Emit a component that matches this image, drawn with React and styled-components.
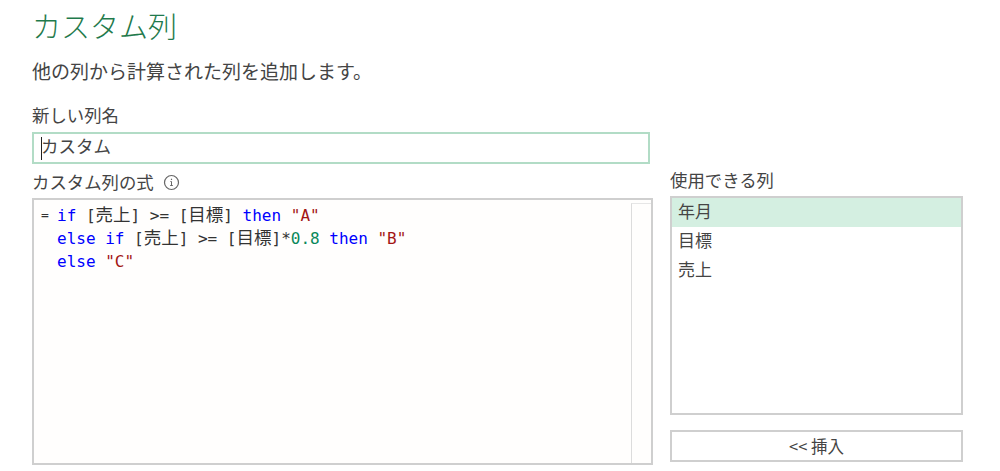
import React from "react";
import styled, { createGlobalStyle } from "styled-components";

const GlobalStyle = createGlobalStyle`
  html, body {
    margin: 0;
    background: #fff;
  }
  body {
    width: 1000px;
    height: 471px;
    overflow: hidden;
    font-family: "Noto Sans CJK JP", "Liberation Sans", sans-serif;
    color: #444;
  }
`;

const Page = styled.div`
  width: 1000px;
  height: 471px;
  overflow: hidden;
  box-sizing: border-box;
  padding: 6px 37px 0 32px;
`;

const Title = styled.h1`
  margin: 0;
  height: 38px;
  font-size: 29px;
  line-height: 38px;
  font-weight: 300;
  color: #1f7a4c;
`;

const Subtitle = styled.p`
  margin: 15px 0 0;
  font-size: 19px;
  line-height: 24px;
  font-weight: 400;
`;

const Label = styled.div`
  display: flex;
  align-items: center;
  gap: 9px;
  margin-top: ${(p) => p.$top || 0}px;
  font-size: 17.4px;
  line-height: 24px;
  font-weight: 400;
`;

const NameField = styled.div`
  display: flex;
  align-items: center;
  box-sizing: border-box;
  width: 618px;
  height: 32px;
  margin-top: 5px;
  padding: 0 0 5px 7px;
  border: 2px solid #b2dcc6;
  font-size: 17.5px;
  font-weight: 400;
`;

const Caret = styled.span`
  width: 1px;
  height: 23px;
  margin: 5px -1px 0 0;
  background: #222;
`;

const Columns = styled.div`
  display: flex;
  gap: 17px;
  margin-top: 6px;
`;

const FormulaColumn = styled.div`
  width: 621px;
  flex: none;
`;

const Editor = styled.div`
  display: flex;
  box-sizing: border-box;
  height: 267px;
  margin-top: 4px;
  border: 2px solid #cfcfcf;
  background: #fffefd;
`;

const Prompt = styled.span`
  width: 16px;
  flex: none;
  padding: 3px 0 0 7px;
  font-family: "DejaVu Sans Mono", monospace;
  font-size: 13px;
  line-height: 23px;
  color: #333;
`;

const Code = styled.pre`
  flex: 1;
  margin: 0;
  padding-top: 4px;
  font-family: "DejaVu Sans Mono", "Noto Sans CJK JP", monospace;
  font-size: 16px;
  line-height: 23px;
  color: #333;
`;

const Cjk = styled.span`
  font-family: "Noto Sans CJK JP", sans-serif;
  font-size: 17.5px;
  line-height: 1;
  font-weight: 400;
`;

const Scrollbar = styled.div`
  width: 19px;
  margin-top: 3px;
  border-left: 1px solid #dcdcdc;
  border-top: 1px solid #e6e6e6;
`;

const Token = styled.span`
  color: ${(p) =>
    p.$kind === "keyword" ? "#0000ff" : p.$kind === "string" ? "#a31515" : p.$kind === "number" ? "#09885a" : "inherit"};
`;

const Sidebar = styled.div`
  width: 293px;
  flex: none;
  margin-top: -2px;
`;

const ColumnList = styled.ul`
  box-sizing: border-box;
  height: 219px;
  margin: 4px 0 0;
  padding: 0;
  list-style: none;
  border: 2px solid #cfcfcf;
`;

const ColumnItem = styled.li`
  height: 29px;
  padding-left: 6px;
  font-size: 17px;
  line-height: 26px;
  font-weight: 400;
  background: ${(p) => (p.$selected ? "#d4efe1" : "transparent")};
`;

const InsertButton = styled.button`
  display: block;
  box-sizing: border-box;
  width: 293px;
  height: 32px;
  margin-top: 15px;
  padding: 0;
  border: 2px solid #cfcfcf;
  background: #fff;
  font-family: inherit;
  font-size: 16.5px;
  font-weight: 400;
  color: #444;
`;

const InfoIcon = () => (
  <svg width="17" height="17" viewBox="0 0 17 17" fill="none" stroke="#666" aria-hidden="true">
    <circle cx="8.5" cy="8.5" r="7" strokeWidth="1.2" />
    <path d="M8.5 7.5v4M7.4 7.5h1.1M7.2 11.5h2.6" strokeWidth="1" />
    <path d="M8.5 4.7v1.3" strokeWidth="1.2" />
  </svg>
);

const App = () => (
  <Page>
    <GlobalStyle />
    <Title>カスタム列</Title>
    <Subtitle>他の列から計算された列を追加します。</Subtitle>
    <Label $top={20}>新しい列名</Label>
    <NameField>
      <Caret />
      カスタム
    </NameField>
    <Columns>
      <FormulaColumn>
        <Label>
          カスタム列の式
          <InfoIcon />
        </Label>
        <Editor>
          <Prompt>=</Prompt>
          <Code>
            <Token $kind="keyword">if</Token>
            {" ["}
            <Cjk>売上</Cjk>
            {"] >= ["}
            <Cjk>目標</Cjk>
            {"] "}
            <Token $kind="keyword">then</Token> <Token $kind="string">"A"</Token>
            {"\n"}
            <Token $kind="keyword">else if</Token>
            {" ["}
            <Cjk>売上</Cjk>
            {"] >= ["}
            <Cjk>目標</Cjk>
            {"]*"}
            <Token $kind="number">0.8</Token> <Token $kind="keyword">then</Token> <Token $kind="string">"B"</Token>
            {"\n"}
            <Token $kind="keyword">else</Token> <Token $kind="string">"C"</Token>
          </Code>
          <Scrollbar />
        </Editor>
      </FormulaColumn>
      <Sidebar>
        <Label>使用できる列</Label>
        <ColumnList>
          <ColumnItem $selected>年月</ColumnItem>
          <ColumnItem>目標</ColumnItem>
          <ColumnItem>売上</ColumnItem>
        </ColumnList>
        <InsertButton>&lt;&lt; 挿入</InsertButton>
      </Sidebar>
    </Columns>
  </Page>
);

export default App;
